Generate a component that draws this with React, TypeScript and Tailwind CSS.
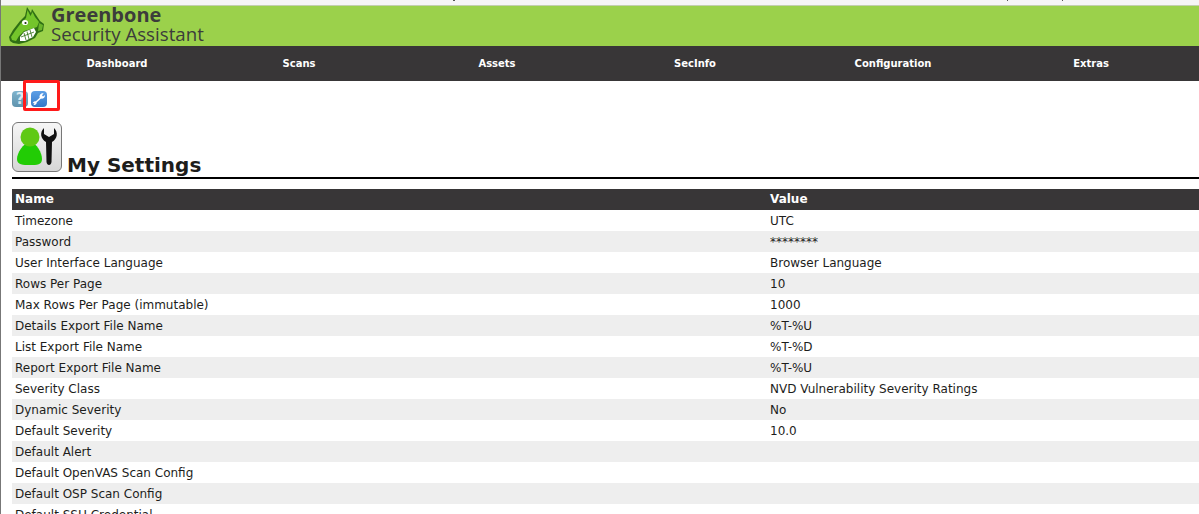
const navItems = ['Dashboard', 'Scans', 'Assets', 'SecInfo', 'Configuration', 'Extras'];

const settings = [
  ['Timezone', 'UTC'],
  ['Password', '********'],
  ['User Interface Language', 'Browser Language'],
  ['Rows Per Page', '10'],
  ['Max Rows Per Page (immutable)', '1000'],
  ['Details Export File Name', '%T-%U'],
  ['List Export File Name', '%T-%D'],
  ['Report Export File Name', '%T-%U'],
  ['Severity Class', 'NVD Vulnerability Severity Ratings'],
  ['Dynamic Severity', 'No'],
  ['Default Severity', '10.0'],
  ['Default Alert', ''],
  ['Default OpenVAS Scan Config', ''],
  ['Default OSP Scan Config', ''],
  ['Default SSH Credential', ''],
];

function Logo() {
  return (
    <svg width="38" height="40" viewBox="8 6 38 40" className="shrink-0">
      {/* dog head */}
      <path
        d="M27 7 L31 13 L32 9 L36 15 L40 21 L44 24 L43 31 L38 33 L35 38 L27 42 L19 44 L13 43 L10 41 L9 37 L13 30 L20 21 L25 16 Z"
        fill="#2f6f14"
      />
      <path
        d="M27.5 10 L30.5 16 L32.5 12 L35 17 L39 22 L37 27 L31 29 L24 31 L19 36 L16 41 L12 40 L11 37 L15 31 L21 23 L26 18 Z"
        fill="#74c52b"
      />
      <path d="M39 23 L43 25 L42 30 L38 31 Z" fill="#6ab52a" />
      {/* eye */}
      <ellipse cx="25" cy="22.5" rx="3" ry="2.6" fill="#ffffff" />
      <circle cx="25.5" cy="23" r="1.1" fill="#17330a" />
      {/* teeth */}
      <path d="M20 37 L24 32 L34 28 L36 32 L33 37 L25 41 L20 41 Z" fill="#ffffff" />
      <path d="M24 33 L26 40 M27 31.5 L29 39 M30 30 L32 37 M21 37 L34 32" stroke="#2f6f14" strokeWidth="0.8" fill="none" />
    </svg>
  );
}

function HelpIcon() {
  return (
    <span className="w-4 h-4 rounded-sm bg-gradient-to-b from-[#7fb3cc] to-[#5f93ad] text-white/75 text-[15px] leading-4 font-bold text-center">
      ?
    </span>
  );
}

function WrenchIcon() {
  return (
    <span className="w-4 h-4 rounded-sm bg-gradient-to-b from-[#5c9fe6] to-[#3479c9] flex items-center justify-center">
      <svg width="16" height="16" viewBox="0 0 16 16">
        <path d="M4 12 L10 6.5" stroke="#fff" strokeWidth="1.5" strokeLinecap="round" />
        <path d="M8.6 6.6 C8 4.2 10 2 12.6 2.4 L11 4.2 L12 5.6 L14 4 C14.2 6.4 12.2 8 10 7.6 Z" fill="#fff" />
        <path d="M5.6 11.8 C5.8 13.4 4 14.4 2.4 13.8 L3.6 12.6 L3 11.8 L1.8 12.8 C1.6 11 3.2 9.8 4.8 10.4 Z" fill="#fff" />
      </svg>
    </span>
  );
}

function SettingsIcon() {
  return (
    <div className="w-[50px] h-[50px] rounded-md border border-[#777] bg-gradient-to-b from-[#f6f6f6] to-[#d6d6d6] shrink-0">
      <svg width="48" height="48" viewBox="0 0 48 48">
        <path d="M17 19 C10 20 4 30 4 36 C4 42 10 42 17 42 C24 42 29 42 29 36 C29 30 24 20 17 19 Z" fill="#22cc05" />
        <circle cx="17" cy="14" r="9.5" fill="#5fc914" />
        <path
          d="M31 5 C26.5 9 27.5 16 33 19 L33.5 39 C34 43 38 43 38.5 39 L39 19 C44.5 16 45.5 9 41 5 L41 11 L36 14 L31 11 Z"
          fill="#111111"
        />
      </svg>
    </div>
  );
}

export default function App() {
  return (
    <div className="h-[514px] overflow-hidden bg-white border-l border-[#777] font-['DejaVu_Sans',sans-serif] text-[12px] text-[#1d1d1b]">
      <div className="relative h-[5px] bg-[#f5f5f5]">
        {/* descenders of the browser title bar, cut by the screenshot */}
        <span className="absolute left-[452px] top-0 w-[2px] h-px bg-[#555]" />
        <span className="absolute left-[1006px] top-0 w-px h-px bg-[#555]" />
        <span className="absolute left-[1061px] top-0 w-px h-px bg-[#555]" />
      </div>
      <div className="h-px bg-[#c3cfae]" />
      <header className="h-10 bg-[#9bd14b] flex items-start pl-[7px] gap-[5px]">
        <Logo />
        <div className="text-[#3c3c3b] font-['Open_Sans',sans-serif]">
          <div className="text-[20px] leading-[18px] font-bold">Greenbone</div>
          <div className="text-[18.7px] leading-[20px]">Security Assistant</div>
        </div>
      </header>
      <nav className="h-[35px] bg-[#383637] flex items-center pl-[33px] pr-[9px] text-[10px] leading-[37px] font-bold text-white">
        <div className="w-[166px] text-center">{navItems[0]}</div>
        {navItems.slice(1).map((item) => (
          <div key={item} className="w-[198px] text-center">
            {item}
          </div>
        ))}
      </nav>
      <main className="pl-[11px]">
        <div className="relative flex gap-[3px] pt-[10px] h-[41px]">
          <HelpIcon />
          <WrenchIcon />
          {/* annotation box from the screenshot */}
          <div className="absolute left-[11px] -top-px w-[37px] h-[31px] border-[3px] border-[#ff1a1a] rounded-[2px]" />
        </div>
        <div className="flex items-end h-[57px] border-b-2 border-black gap-[5px]">
          <div className="self-start">
            <SettingsIcon />
          </div>
          <h1 className="text-[20px] leading-[24px] font-bold">My Settings</h1>
        </div>
        <div className="mt-[10px]">
          <div className="grid grid-cols-[755px_1fr] h-[21px] bg-[#383637] text-white font-bold leading-[21px] pl-[3px]">
            <div>Name</div>
            <div>Value</div>
          </div>
          {settings.map(([name, value], i) => (
            <div
              key={name}
              className={`grid grid-cols-[755px_1fr] h-[21px] leading-[22px] pl-[3px] ${i % 2 === 1 ? 'bg-[#eeeeee]' : 'bg-white'}`}
            >
              <div>{name}</div>
              <div>{value}</div>
            </div>
          ))}
        </div>
      </main>
    </div>
  );
}
